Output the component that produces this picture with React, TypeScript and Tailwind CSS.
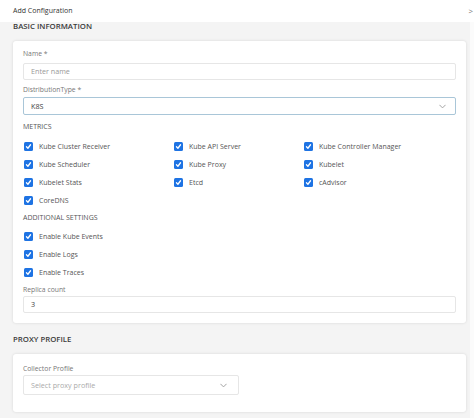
import React from 'react';

const metrics = [
    'Kube Cluster Receiver', 'Kube API Server', 'Kube Controller Manager',
    'Kube Scheduler', 'Kube Proxy', 'Kubelet',
    'Kubelet Stats', 'Etcd', 'cAdvisor',
    'CoreDNS',
];

const settings = ['Enable Kube Events', 'Enable Logs', 'Enable Traces'];

const Chevron = ({ className = '' }: { className?: string }) => (
    <svg width="7" height="5" viewBox="0 0 10 6" fill="none" stroke="#9a9a9a" strokeWidth="1.3" strokeLinecap="round" strokeLinejoin="round" className={className}>
        <polyline points="1 1 5 5 9 1" />
    </svg>
);

const Check = ({ label }: { label: string }) => (
    <div className="flex items-center h-[18px]">
        <span className="ml-[1px] w-[9px] h-[9px] rounded-[1.5px] bg-[#1e73e3] flex items-center justify-center">
            <svg width="7" height="7" viewBox="0 0 12 12" fill="none" stroke="white" strokeWidth="2.2" strokeLinecap="round" strokeLinejoin="round">
                <polyline points="2.5 6.5 5 9 9.5 3" />
            </svg>
        </span>
        <span className="ml-[6px] text-[7px] text-[#555] leading-none">{label}</span>
    </div>
);

const Label = ({ children }: { children: React.ReactNode }) => (
    <div className="text-[6.8px] text-[#777] leading-[8px] h-[8px]">{children}</div>
);

const SectionTitle = ({ children }: { children: React.ReactNode }) => (
    <div className="text-[7px] text-[#555] leading-[8px] h-[8px]">{children}</div>
);

export default function App() {
    return (
        <div className="w-[474px] h-[418px] overflow-hidden bg-[#f4f4f4] flex flex-col" style={{ fontFamily: '"Open Sans", "Noto Sans", sans-serif' }}>
            {/* header */}
            <div className="h-[22px] bg-white flex items-center justify-between pl-[13px] shrink-0">
                <span className="text-[7px] text-[#333]">Add Configuration</span>
                <span className="text-[8px] text-[#777] pr-[1px]">&gt;</span>
            </div>

            <div className="flex flex-1 min-h-0">
                <div className="flex-1 pl-[13px] pr-[4px]">
                    <div className="text-[7.8px] font-semibold text-[#3a3a3a] leading-[8px] h-[8px]">BASIC INFORMATION</div>

                    {/* basic card */}
                    <div className="mt-[11px] bg-white rounded-[3px] shadow-[0_0_3px_rgba(0,0,0,0.12)] px-[10px] pt-[9px] pb-[10px]">
                        <Label>Name *</Label>
                        <div className="mt-[5px] h-[17px] border border-[#e6e6e6] rounded-[2px] flex items-center px-[7px]">
                            <span className="text-[7.2px] text-[#999]">Enter name</span>
                        </div>

                        <div className="mt-[6px]"><Label>DistributionType *</Label></div>
                        <div className="mt-[3px] h-[18px] border border-[#a9c6d8] rounded-[2px] flex items-center justify-between px-[7px]">
                            <span className="text-[7.2px] text-[#444]">K8S</span>
                            <Chevron className="mr-[2px]" />
                        </div>

                        <div className="mt-[8px]"><SectionTitle>METRICS</SectionTitle></div>
                        <div className="mt-[6px] grid grid-cols-[150px_130px_1fr]">
                            {metrics.map(m => <Check key={m} label={m} />)}
                        </div>

                        <div className="mt-[5px]"><SectionTitle>ADDITIONAL SETTINGS</SectionTitle></div>
                        <div className="mt-[5px] flex flex-col">
                            {settings.map(s => <Check key={s} label={s} />)}
                        </div>

                        <div className="mt-[5px]"><Label>Replica count</Label></div>
                        <div className="mt-[2px] h-[17px] border border-[#e6e6e6] rounded-[2px] flex items-center px-[7px]">
                            <span className="text-[7.2px] text-[#444]">3</span>
                        </div>
                    </div>

                    <div className="mt-[12px] text-[7.8px] font-semibold text-[#3a3a3a] leading-[8px] h-[8px]">PROXY PROFILE</div>

                    {/* proxy card */}
                    <div className="mt-[11px] bg-white rounded-[3px] shadow-[0_0_3px_rgba(0,0,0,0.12)] px-[10px] pt-[11px] pb-[17px]">
                        <Label>Collector Profile</Label>
                        <div className="mt-[2px] w-[216px] h-[20px] border border-[#e6e6e6] rounded-[2px] flex items-center justify-between px-[7px]">
                            <span className="text-[7.2px] text-[#aaa]">Select proxy profile</span>
                            <Chevron className="mr-[4px]" />
                        </div>
                    </div>
                </div>
                <div className="w-[4px] bg-[#fbfbfb] shrink-0" />
            </div>
        </div>
    );
}
